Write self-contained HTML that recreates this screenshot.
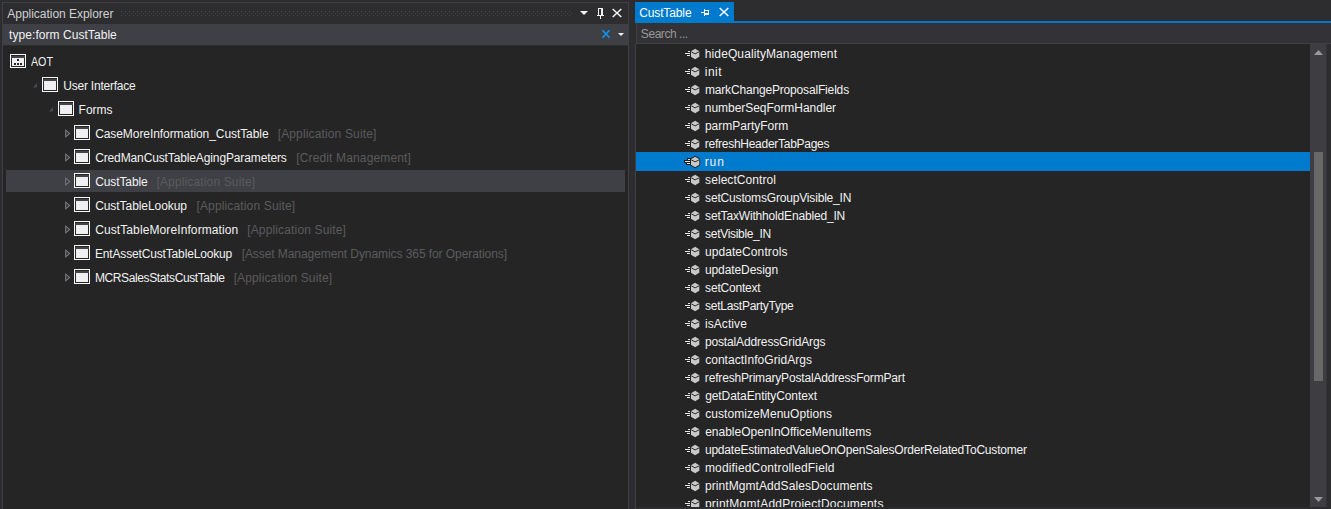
<!DOCTYPE html>
<html><head><meta charset="utf-8"><title>Application Explorer</title>
<style>
html,body{margin:0;padding:0;}
body{width:1331px;height:509px;overflow:hidden;background:#2d2d30;position:relative;
 font-family:"Liberation Sans",sans-serif;font-size:12px;color:#f1f1f1;}
.abs{position:absolute;}
.t{position:absolute;white-space:nowrap;line-height:14px;height:14px;}
.tag{color:#5b5b5c;}
svg{position:absolute;overflow:visible;}
</style></head><body>

<div class="abs" style="left:2px;top:2px;width:627px;height:507px;background:#3f3f46;"></div>
<div class="abs" style="left:3px;top:3px;width:625px;height:21px;background:#2d2d30;"></div>
<div class="abs" style="left:3px;top:24px;width:625px;height:21px;background:#3f3f46;"></div>
<div class="abs" style="left:3px;top:45px;width:625px;height:1px;background:#2d2d30;"></div>
<div class="abs" style="left:3px;top:46px;width:625px;height:463px;background:#252526;"></div>
<span class="t" id="ttl" style="left:7.3px;top:7px;color:#d0d0d0;letter-spacing:-0.036px;margin-left:0.07px;">Application Explorer</span>
<svg style="left:121px;top:11px" width="452" height="5" shape-rendering="crispEdges"><defs><pattern id="gp" width="4" height="4" patternUnits="userSpaceOnUse"><rect x="0" y="0" width="1" height="1" fill="#46464a"/><rect x="2" y="2" width="1" height="1" fill="#46464a"/></pattern></defs><rect width="452" height="5" fill="url(#gp)"/></svg>
<svg style="left:580px;top:11px" width="8" height="4"><path d="M0 0H8L4 4Z" fill="#f1f1f1"/></svg>
<svg style="left:597px;top:8px" width="8" height="11" shape-rendering="crispEdges"><path d="M2 0H6V7H7V8H4V11H3V8H0V7H1V0H2ZM2 1V7H4V1Z" fill="#f1f1f1" fill-rule="evenodd"/></svg>
<svg style="left:612px;top:9px" width="10" height="8"><path d="M0.7 0L9.3 8M9.3 0L0.7 8" stroke="#f1f1f1" stroke-width="1.55" fill="none"/></svg>
<span class="t" id="srch" style="left:9px;top:28px;letter-spacing:0.053px;margin-left:0.11px;">type:form CustTable</span>
<svg style="left:602px;top:30px" width="8" height="8"><path d="M0.5 0.3L7.5 7.7M7.5 0.3L0.5 7.7" stroke="#0a97f5" stroke-width="1.6" fill="none"/></svg>
<svg style="left:618px;top:33px" width="6" height="3"><path d="M0 0H6L3 3Z" fill="#f1f1f1"/></svg>
<svg style="left:10px;top:54px" width="16" height="14" shape-rendering="crispEdges"><rect x="0.5" y="0.5" width="15" height="13" fill="#252526" stroke="#f8f8f8"/><rect x="1" y="2" width="14" height="2" fill="#464648"/><rect x="2" y="4" width="12" height="8" fill="#efeff1"/><rect x="7" y="5" width="2" height="2" fill="#252526"/><rect x="4" y="9" width="2" height="2" fill="#252526"/><rect x="7" y="9" width="2" height="2" fill="#252526"/><rect x="10" y="9" width="2" height="2" fill="#252526"/></svg>
<span class="t" id="aot" style="left:31.4px;top:55px;transform-origin:0 0;transform:scaleX(0.8895);margin-left:-0.35px;">AOT</span>
<svg style="left:32.8px;top:83.2px" width="4" height="4.5"><path d="M4 0V4.5H0Z" fill="#48484a"/></svg>
<svg style="left:42px;top:77px" width="16" height="15" shape-rendering="crispEdges"><rect x="0.5" y="0.5" width="15" height="14" fill="#252526" stroke="#f8f8f8"/><rect x="1" y="2" width="14" height="2" fill="#464648"/><rect x="2" y="4" width="12" height="9" fill="#efeff1"/></svg>
<span class="t" id="ui" style="left:63.9px;top:79px;letter-spacing:-0.225px;margin-left:-0.60px;">User Interface</span>
<svg style="left:48.8px;top:107.2px" width="4" height="4.5"><path d="M4 0V4.5H0Z" fill="#48484a"/></svg>
<svg style="left:58px;top:101px" width="16" height="15" shape-rendering="crispEdges"><rect x="0.5" y="0.5" width="15" height="14" fill="#252526" stroke="#f8f8f8"/><rect x="1" y="2" width="14" height="2" fill="#464648"/><rect x="2" y="4" width="12" height="9" fill="#efeff1"/></svg>
<span class="t" id="forms" style="left:79.6px;top:103px;letter-spacing:-0.014px;margin-left:-0.99px;">Forms</span>
<svg style="left:65px;top:128.5px" width="6" height="9"><path d="M0.7 1.1L4.7 4.5L0.7 7.9Z" fill="#353537" stroke="#77777a" stroke-width="1.1"/></svg>
<svg style="left:74px;top:125px" width="16" height="15" shape-rendering="crispEdges"><rect x="0.5" y="0.5" width="15" height="14" fill="#252526" stroke="#f8f8f8"/><rect x="1" y="2" width="14" height="2" fill="#464648"/><rect x="2" y="4" width="12" height="9" fill="#efeff1"/></svg>
<span class="t" id="l0" style="left:95.5px;top:127px;letter-spacing:-0.070px;margin-left:-0.37px;">CaseMoreInformation_CustTable</span>
<span class="t tag" id="g0" style="left:278.75px;top:127px;letter-spacing:0.145px;margin-left:-1.10px;">[Application Suite]</span>
<svg style="left:65px;top:152.5px" width="6" height="9"><path d="M0.7 1.1L4.7 4.5L0.7 7.9Z" fill="#353537" stroke="#77777a" stroke-width="1.1"/></svg>
<svg style="left:74px;top:149px" width="16" height="15" shape-rendering="crispEdges"><rect x="0.5" y="0.5" width="15" height="14" fill="#252526" stroke="#f8f8f8"/><rect x="1" y="2" width="14" height="2" fill="#464648"/><rect x="2" y="4" width="12" height="9" fill="#efeff1"/></svg>
<span class="t" id="l1" style="left:95.5px;top:151px;letter-spacing:-0.124px;margin-left:-0.37px;">CredManCustTableAgingParameters</span>
<span class="t tag" id="g1" style="left:297px;top:151px;letter-spacing:0.149px;margin-left:-0.82px;">[Credit Management]</span>
<div class="abs" style="left:6px;top:170px;width:619px;height:22px;background:#3f3f46;"></div>
<svg style="left:65px;top:176.5px" width="6" height="9"><path d="M0.7 1.1L4.7 4.5L0.7 7.9Z" fill="#353537" stroke="#77777a" stroke-width="1.1"/></svg>
<svg style="left:74px;top:173px" width="16" height="15" shape-rendering="crispEdges"><rect x="0.5" y="0.5" width="15" height="14" fill="#252526" stroke="#f8f8f8"/><rect x="1" y="2" width="14" height="2" fill="#464648"/><rect x="2" y="4" width="12" height="9" fill="#efeff1"/></svg>
<span class="t" id="l2" style="left:95.5px;top:175px;letter-spacing:-0.088px;margin-left:-0.38px;">CustTable</span>
<span class="t tag" id="g2" style="left:157.5px;top:175px;letter-spacing:0.143px;margin-left:-1.07px;">[Application Suite]</span>
<svg style="left:65px;top:200.5px" width="6" height="9"><path d="M0.7 1.1L4.7 4.5L0.7 7.9Z" fill="#353537" stroke="#77777a" stroke-width="1.1"/></svg>
<svg style="left:74px;top:197px" width="16" height="15" shape-rendering="crispEdges"><rect x="0.5" y="0.5" width="15" height="14" fill="#252526" stroke="#f8f8f8"/><rect x="1" y="2" width="14" height="2" fill="#464648"/><rect x="2" y="4" width="12" height="9" fill="#efeff1"/></svg>
<span class="t" id="l3" style="left:95.5px;top:199px;letter-spacing:-0.060px;margin-left:-0.37px;">CustTableLookup</span>
<span class="t tag" id="g3" style="left:197.5px;top:199px;letter-spacing:0.145px;margin-left:-1.04px;">[Application Suite]</span>
<svg style="left:65px;top:224.5px" width="6" height="9"><path d="M0.7 1.1L4.7 4.5L0.7 7.9Z" fill="#353537" stroke="#77777a" stroke-width="1.1"/></svg>
<svg style="left:74px;top:221px" width="16" height="15" shape-rendering="crispEdges"><rect x="0.5" y="0.5" width="15" height="14" fill="#252526" stroke="#f8f8f8"/><rect x="1" y="2" width="14" height="2" fill="#464648"/><rect x="2" y="4" width="12" height="9" fill="#efeff1"/></svg>
<span class="t" id="l4" style="left:95.5px;top:223px;letter-spacing:0.105px;margin-left:-0.37px;">CustTableMoreInformation</span>
<span class="t tag" id="g4" style="left:248px;top:223px;letter-spacing:0.150px;margin-left:-0.82px;">[Application Suite]</span>
<svg style="left:65px;top:248.5px" width="6" height="9"><path d="M0.7 1.1L4.7 4.5L0.7 7.9Z" fill="#353537" stroke="#77777a" stroke-width="1.1"/></svg>
<svg style="left:74px;top:245px" width="16" height="15" shape-rendering="crispEdges"><rect x="0.5" y="0.5" width="15" height="14" fill="#252526" stroke="#f8f8f8"/><rect x="1" y="2" width="14" height="2" fill="#464648"/><rect x="2" y="4" width="12" height="9" fill="#efeff1"/></svg>
<span class="t" id="l5" style="left:95.5px;top:247px;letter-spacing:-0.158px;margin-left:-0.56px;">EntAssetCustTableLookup</span>
<span class="t tag" id="g5" style="left:242.6px;top:247px;letter-spacing:-0.075px;margin-left:-0.96px;">[Asset Management Dynamics 365 for Operations]</span>
<svg style="left:65px;top:272.5px" width="6" height="9"><path d="M0.7 1.1L4.7 4.5L0.7 7.9Z" fill="#353537" stroke="#77777a" stroke-width="1.1"/></svg>
<svg style="left:74px;top:269px" width="16" height="15" shape-rendering="crispEdges"><rect x="0.5" y="0.5" width="15" height="14" fill="#252526" stroke="#f8f8f8"/><rect x="1" y="2" width="14" height="2" fill="#464648"/><rect x="2" y="4" width="12" height="9" fill="#efeff1"/></svg>
<span class="t" id="l6" style="left:95.5px;top:271px;letter-spacing:-0.386px;margin-left:-0.56px;">MCRSalesStatsCustTable</span>
<span class="t tag" id="g6" style="left:234.3px;top:271px;letter-spacing:0.131px;margin-left:-0.65px;">[Application Suite]</span>
<div class="abs" style="left:635px;top:2px;width:99px;height:21px;background:#007acc;"></div>
<div class="abs" style="left:635px;top:21px;width:696px;height:2px;background:#007acc;"></div>
<span class="t" id="tab" style="left:639.9px;top:6px;color:#ffffff;letter-spacing:-0.115px;margin-left:-0.75px;">CustTable</span>
<svg style="left:701px;top:9px" width="9" height="7" shape-rendering="crispEdges"><path d="M0 3H3V0H4V1H8V6H4V7H3V4H0ZM4 2V4H7V2Z" fill="#ffffff" fill-rule="evenodd"/></svg>
<svg style="left:719px;top:8px" width="10" height="8"><path d="M0.7 0L9.3 8M9.3 0L0.7 8" stroke="#ffffff" stroke-width="1.55" fill="none"/></svg>
<div class="abs" style="left:636px;top:23px;width:695px;height:21px;background:#3f3f46;"></div>
<div class="abs" style="left:637px;top:23px;width:694px;height:20px;background:#333337;"></div>
<span class="t" id="rs" style="left:641.3px;top:27px;color:#999999;letter-spacing:-0.454px;margin-left:-0.44px;">Search ...</span>
<div class="abs" style="left:635px;top:44px;width:1px;height:465px;background:#3f3f46;"></div>
<div class="abs" style="left:636px;top:44px;width:674px;height:463px;background:#252526;overflow:hidden;" id="list">
<svg style="left:49px;top:5px" width="15" height="11"><g shape-rendering="crispEdges" fill="#e4e4e4"><rect x="3" y="2" width="2" height="1"/><rect x="0" y="4" width="5" height="1"/><rect x="2" y="6" width="3" height="1"/></g><path d="M10.1 -0.3L14.3 2.3V7.7L10.1 10.2L6 7.7V2.3Z" fill="#c8c8c8"/><path d="M6.2 2.8L10.1 4.9L14.1 2.8" fill="none" stroke="#2c2c2d" stroke-width="1"/></svg>
<span class="t" id="r0" style="left:69.29999999999995px;top:3px;letter-spacing:0.103px;margin-left:-0.47px;">hideQualityManagement</span>
<svg style="left:49px;top:23px" width="15" height="11"><g shape-rendering="crispEdges" fill="#e4e4e4"><rect x="3" y="2" width="2" height="1"/><rect x="0" y="4" width="5" height="1"/><rect x="2" y="6" width="3" height="1"/></g><path d="M10.1 -0.3L14.3 2.3V7.7L10.1 10.2L6 7.7V2.3Z" fill="#c8c8c8"/><path d="M6.2 2.8L10.1 4.9L14.1 2.8" fill="none" stroke="#2c2c2d" stroke-width="1"/></svg>
<span class="t" id="r1" style="left:69.29999999999995px;top:21px;letter-spacing:0.439px;margin-left:-0.45px;">init</span>
<svg style="left:49px;top:41px" width="15" height="11"><g shape-rendering="crispEdges" fill="#e4e4e4"><rect x="3" y="2" width="2" height="1"/><rect x="0" y="4" width="5" height="1"/><rect x="2" y="6" width="3" height="1"/></g><path d="M10.1 -0.3L14.3 2.3V7.7L10.1 10.2L6 7.7V2.3Z" fill="#c8c8c8"/><path d="M6.2 2.8L10.1 4.9L14.1 2.8" fill="none" stroke="#2c2c2d" stroke-width="1"/></svg>
<span class="t" id="r2" style="left:69.29999999999995px;top:39px;letter-spacing:-0.168px;margin-left:-0.39px;">markChangeProposalFields</span>
<svg style="left:49px;top:59px" width="15" height="11"><g shape-rendering="crispEdges" fill="#e4e4e4"><rect x="3" y="2" width="2" height="1"/><rect x="0" y="4" width="5" height="1"/><rect x="2" y="6" width="3" height="1"/></g><path d="M10.1 -0.3L14.3 2.3V7.7L10.1 10.2L6 7.7V2.3Z" fill="#c8c8c8"/><path d="M6.2 2.8L10.1 4.9L14.1 2.8" fill="none" stroke="#2c2c2d" stroke-width="1"/></svg>
<span class="t" id="r3" style="left:69.29999999999995px;top:57px;letter-spacing:-0.042px;margin-left:-0.47px;">numberSeqFormHandler</span>
<svg style="left:49px;top:77px" width="15" height="11"><g shape-rendering="crispEdges" fill="#e4e4e4"><rect x="3" y="2" width="2" height="1"/><rect x="0" y="4" width="5" height="1"/><rect x="2" y="6" width="3" height="1"/></g><path d="M10.1 -0.3L14.3 2.3V7.7L10.1 10.2L6 7.7V2.3Z" fill="#c8c8c8"/><path d="M6.2 2.8L10.1 4.9L14.1 2.8" fill="none" stroke="#2c2c2d" stroke-width="1"/></svg>
<span class="t" id="r4" style="left:69.29999999999995px;top:75px;letter-spacing:-0.005px;margin-left:-0.38px;">parmPartyForm</span>
<svg style="left:49px;top:95px" width="15" height="11"><g shape-rendering="crispEdges" fill="#e4e4e4"><rect x="3" y="2" width="2" height="1"/><rect x="0" y="4" width="5" height="1"/><rect x="2" y="6" width="3" height="1"/></g><path d="M10.1 -0.3L14.3 2.3V7.7L10.1 10.2L6 7.7V2.3Z" fill="#c8c8c8"/><path d="M6.2 2.8L10.1 4.9L14.1 2.8" fill="none" stroke="#2c2c2d" stroke-width="1"/></svg>
<span class="t" id="r5" style="left:69.29999999999995px;top:93px;letter-spacing:-0.273px;margin-left:-0.44px;">refreshHeaderTabPages</span>
<div class="abs" style="left:0;top:108px;width:674px;height:19px;background:#007acc;"></div>
<svg style="left:49px;top:113px" width="15" height="11"><g shape-rendering="crispEdges" fill="#e4e4e4" stroke="#1e1e1e" stroke-width="1.6" paint-order="stroke"><rect x="3" y="2" width="2" height="1"/><rect x="0" y="4" width="5" height="1"/><rect x="2" y="6" width="3" height="1"/></g><path d="M10.1 -0.3L14.3 2.3V7.7L10.1 10.2L6 7.7V2.3Z" fill="#c8c8c8" stroke="#1e1e1e" stroke-width="1.6" paint-order="stroke"/><path d="M6.2 2.8L10.1 4.9L14.1 2.8" fill="none" stroke="#2c2c2d" stroke-width="1"/></svg>
<span class="t" id="r6" style="left:69.29999999999995px;top:111px;letter-spacing:0.892px;margin-left:-0.62px;">run</span>
<svg style="left:49px;top:131px" width="15" height="11"><g shape-rendering="crispEdges" fill="#e4e4e4"><rect x="3" y="2" width="2" height="1"/><rect x="0" y="4" width="5" height="1"/><rect x="2" y="6" width="3" height="1"/></g><path d="M10.1 -0.3L14.3 2.3V7.7L10.1 10.2L6 7.7V2.3Z" fill="#c8c8c8"/><path d="M6.2 2.8L10.1 4.9L14.1 2.8" fill="none" stroke="#2c2c2d" stroke-width="1"/></svg>
<span class="t" id="r7" style="left:69.29999999999995px;top:129px;letter-spacing:0.059px;margin-left:-0.19px;">selectControl</span>
<svg style="left:49px;top:149px" width="15" height="11"><g shape-rendering="crispEdges" fill="#e4e4e4"><rect x="3" y="2" width="2" height="1"/><rect x="0" y="4" width="5" height="1"/><rect x="2" y="6" width="3" height="1"/></g><path d="M10.1 -0.3L14.3 2.3V7.7L10.1 10.2L6 7.7V2.3Z" fill="#c8c8c8"/><path d="M6.2 2.8L10.1 4.9L14.1 2.8" fill="none" stroke="#2c2c2d" stroke-width="1"/></svg>
<span class="t" id="r8" style="left:69.29999999999995px;top:147px;letter-spacing:-0.174px;margin-left:-0.19px;">setCustomsGroupVisible_IN</span>
<svg style="left:49px;top:167px" width="15" height="11"><g shape-rendering="crispEdges" fill="#e4e4e4"><rect x="3" y="2" width="2" height="1"/><rect x="0" y="4" width="5" height="1"/><rect x="2" y="6" width="3" height="1"/></g><path d="M10.1 -0.3L14.3 2.3V7.7L10.1 10.2L6 7.7V2.3Z" fill="#c8c8c8"/><path d="M6.2 2.8L10.1 4.9L14.1 2.8" fill="none" stroke="#2c2c2d" stroke-width="1"/></svg>
<span class="t" id="r9" style="left:69.29999999999995px;top:165px;letter-spacing:-0.173px;margin-left:-0.19px;">setTaxWithholdEnabled_IN</span>
<svg style="left:49px;top:185px" width="15" height="11"><g shape-rendering="crispEdges" fill="#e4e4e4"><rect x="3" y="2" width="2" height="1"/><rect x="0" y="4" width="5" height="1"/><rect x="2" y="6" width="3" height="1"/></g><path d="M10.1 -0.3L14.3 2.3V7.7L10.1 10.2L6 7.7V2.3Z" fill="#c8c8c8"/><path d="M6.2 2.8L10.1 4.9L14.1 2.8" fill="none" stroke="#2c2c2d" stroke-width="1"/></svg>
<span class="t" id="r10" style="left:69.29999999999995px;top:183px;letter-spacing:-0.313px;margin-left:-0.19px;">setVisible_IN</span>
<svg style="left:49px;top:203px" width="15" height="11"><g shape-rendering="crispEdges" fill="#e4e4e4"><rect x="3" y="2" width="2" height="1"/><rect x="0" y="4" width="5" height="1"/><rect x="2" y="6" width="3" height="1"/></g><path d="M10.1 -0.3L14.3 2.3V7.7L10.1 10.2L6 7.7V2.3Z" fill="#c8c8c8"/><path d="M6.2 2.8L10.1 4.9L14.1 2.8" fill="none" stroke="#2c2c2d" stroke-width="1"/></svg>
<span class="t" id="r11" style="left:69.29999999999995px;top:201px;letter-spacing:0.086px;margin-left:-0.41px;">updateControls</span>
<svg style="left:49px;top:221px" width="15" height="11"><g shape-rendering="crispEdges" fill="#e4e4e4"><rect x="3" y="2" width="2" height="1"/><rect x="0" y="4" width="5" height="1"/><rect x="2" y="6" width="3" height="1"/></g><path d="M10.1 -0.3L14.3 2.3V7.7L10.1 10.2L6 7.7V2.3Z" fill="#c8c8c8"/><path d="M6.2 2.8L10.1 4.9L14.1 2.8" fill="none" stroke="#2c2c2d" stroke-width="1"/></svg>
<span class="t" id="r12" style="left:69.29999999999995px;top:219px;letter-spacing:-0.080px;margin-left:-0.41px;">updateDesign</span>
<svg style="left:49px;top:239px" width="15" height="11"><g shape-rendering="crispEdges" fill="#e4e4e4"><rect x="3" y="2" width="2" height="1"/><rect x="0" y="4" width="5" height="1"/><rect x="2" y="6" width="3" height="1"/></g><path d="M10.1 -0.3L14.3 2.3V7.7L10.1 10.2L6 7.7V2.3Z" fill="#c8c8c8"/><path d="M6.2 2.8L10.1 4.9L14.1 2.8" fill="none" stroke="#2c2c2d" stroke-width="1"/></svg>
<span class="t" id="r13" style="left:69.29999999999995px;top:237px;letter-spacing:-0.204px;margin-left:-0.19px;">setContext</span>
<svg style="left:49px;top:257px" width="15" height="11"><g shape-rendering="crispEdges" fill="#e4e4e4"><rect x="3" y="2" width="2" height="1"/><rect x="0" y="4" width="5" height="1"/><rect x="2" y="6" width="3" height="1"/></g><path d="M10.1 -0.3L14.3 2.3V7.7L10.1 10.2L6 7.7V2.3Z" fill="#c8c8c8"/><path d="M6.2 2.8L10.1 4.9L14.1 2.8" fill="none" stroke="#2c2c2d" stroke-width="1"/></svg>
<span class="t" id="r14" style="left:69.29999999999995px;top:255px;letter-spacing:-0.271px;margin-left:-0.19px;">setLastPartyType</span>
<svg style="left:49px;top:275px" width="15" height="11"><g shape-rendering="crispEdges" fill="#e4e4e4"><rect x="3" y="2" width="2" height="1"/><rect x="0" y="4" width="5" height="1"/><rect x="2" y="6" width="3" height="1"/></g><path d="M10.1 -0.3L14.3 2.3V7.7L10.1 10.2L6 7.7V2.3Z" fill="#c8c8c8"/><path d="M6.2 2.8L10.1 4.9L14.1 2.8" fill="none" stroke="#2c2c2d" stroke-width="1"/></svg>
<span class="t" id="r15" style="left:69.29999999999995px;top:273px;letter-spacing:0.081px;margin-left:-0.41px;">isActive</span>
<svg style="left:49px;top:293px" width="15" height="11"><g shape-rendering="crispEdges" fill="#e4e4e4"><rect x="3" y="2" width="2" height="1"/><rect x="0" y="4" width="5" height="1"/><rect x="2" y="6" width="3" height="1"/></g><path d="M10.1 -0.3L14.3 2.3V7.7L10.1 10.2L6 7.7V2.3Z" fill="#c8c8c8"/><path d="M6.2 2.8L10.1 4.9L14.1 2.8" fill="none" stroke="#2c2c2d" stroke-width="1"/></svg>
<span class="t" id="r16" style="left:69.29999999999995px;top:291px;letter-spacing:-0.142px;margin-left:-0.38px;">postalAddressGridArgs</span>
<svg style="left:49px;top:311px" width="15" height="11"><g shape-rendering="crispEdges" fill="#e4e4e4"><rect x="3" y="2" width="2" height="1"/><rect x="0" y="4" width="5" height="1"/><rect x="2" y="6" width="3" height="1"/></g><path d="M10.1 -0.3L14.3 2.3V7.7L10.1 10.2L6 7.7V2.3Z" fill="#c8c8c8"/><path d="M6.2 2.8L10.1 4.9L14.1 2.8" fill="none" stroke="#2c2c2d" stroke-width="1"/></svg>
<span class="t" id="r17" style="left:69.29999999999995px;top:309px;letter-spacing:0.042px;margin-left:-0.18px;">contactInfoGridArgs</span>
<svg style="left:49px;top:329px" width="15" height="11"><g shape-rendering="crispEdges" fill="#e4e4e4"><rect x="3" y="2" width="2" height="1"/><rect x="0" y="4" width="5" height="1"/><rect x="2" y="6" width="3" height="1"/></g><path d="M10.1 -0.3L14.3 2.3V7.7L10.1 10.2L6 7.7V2.3Z" fill="#c8c8c8"/><path d="M6.2 2.8L10.1 4.9L14.1 2.8" fill="none" stroke="#2c2c2d" stroke-width="1"/></svg>
<span class="t" id="r18" style="left:69.29999999999995px;top:327px;letter-spacing:-0.175px;margin-left:-0.44px;">refreshPrimaryPostalAddressFormPart</span>
<svg style="left:49px;top:347px" width="15" height="11"><g shape-rendering="crispEdges" fill="#e4e4e4"><rect x="3" y="2" width="2" height="1"/><rect x="0" y="4" width="5" height="1"/><rect x="2" y="6" width="3" height="1"/></g><path d="M10.1 -0.3L14.3 2.3V7.7L10.1 10.2L6 7.7V2.3Z" fill="#c8c8c8"/><path d="M6.2 2.8L10.1 4.9L14.1 2.8" fill="none" stroke="#2c2c2d" stroke-width="1"/></svg>
<span class="t" id="r19" style="left:69.29999999999995px;top:345px;letter-spacing:-0.081px;margin-left:-0.14px;">getDataEntityContext</span>
<svg style="left:49px;top:365px" width="15" height="11"><g shape-rendering="crispEdges" fill="#e4e4e4"><rect x="3" y="2" width="2" height="1"/><rect x="0" y="4" width="5" height="1"/><rect x="2" y="6" width="3" height="1"/></g><path d="M10.1 -0.3L14.3 2.3V7.7L10.1 10.2L6 7.7V2.3Z" fill="#c8c8c8"/><path d="M6.2 2.8L10.1 4.9L14.1 2.8" fill="none" stroke="#2c2c2d" stroke-width="1"/></svg>
<span class="t" id="r20" style="left:69.29999999999995px;top:363px;letter-spacing:0.074px;margin-left:-0.18px;">customizeMenuOptions</span>
<svg style="left:49px;top:383px" width="15" height="11"><g shape-rendering="crispEdges" fill="#e4e4e4"><rect x="3" y="2" width="2" height="1"/><rect x="0" y="4" width="5" height="1"/><rect x="2" y="6" width="3" height="1"/></g><path d="M10.1 -0.3L14.3 2.3V7.7L10.1 10.2L6 7.7V2.3Z" fill="#c8c8c8"/><path d="M6.2 2.8L10.1 4.9L14.1 2.8" fill="none" stroke="#2c2c2d" stroke-width="1"/></svg>
<span class="t" id="r21" style="left:69.29999999999995px;top:381px;letter-spacing:0.005px;margin-left:-0.18px;">enableOpenInOfficeMenuItems</span>
<svg style="left:49px;top:401px" width="15" height="11"><g shape-rendering="crispEdges" fill="#e4e4e4"><rect x="3" y="2" width="2" height="1"/><rect x="0" y="4" width="5" height="1"/><rect x="2" y="6" width="3" height="1"/></g><path d="M10.1 -0.3L14.3 2.3V7.7L10.1 10.2L6 7.7V2.3Z" fill="#c8c8c8"/><path d="M6.2 2.8L10.1 4.9L14.1 2.8" fill="none" stroke="#2c2c2d" stroke-width="1"/></svg>
<span class="t" id="r22" style="left:69.29999999999995px;top:399px;letter-spacing:-0.188px;margin-left:-0.41px;">updateEstimatedValueOnOpenSalesOrderRelatedToCustomer</span>
<svg style="left:49px;top:419px" width="15" height="11"><g shape-rendering="crispEdges" fill="#e4e4e4"><rect x="3" y="2" width="2" height="1"/><rect x="0" y="4" width="5" height="1"/><rect x="2" y="6" width="3" height="1"/></g><path d="M10.1 -0.3L14.3 2.3V7.7L10.1 10.2L6 7.7V2.3Z" fill="#c8c8c8"/><path d="M6.2 2.8L10.1 4.9L14.1 2.8" fill="none" stroke="#2c2c2d" stroke-width="1"/></svg>
<span class="t" id="r23" style="left:69.29999999999995px;top:417px;letter-spacing:0.160px;margin-left:-0.39px;">modifiedControlledField</span>
<svg style="left:49px;top:437px" width="15" height="11"><g shape-rendering="crispEdges" fill="#e4e4e4"><rect x="3" y="2" width="2" height="1"/><rect x="0" y="4" width="5" height="1"/><rect x="2" y="6" width="3" height="1"/></g><path d="M10.1 -0.3L14.3 2.3V7.7L10.1 10.2L6 7.7V2.3Z" fill="#c8c8c8"/><path d="M6.2 2.8L10.1 4.9L14.1 2.8" fill="none" stroke="#2c2c2d" stroke-width="1"/></svg>
<span class="t" id="r24" style="left:69.29999999999995px;top:435px;letter-spacing:0.083px;margin-left:-0.38px;">printMgmtAddSalesDocuments</span>
<svg style="left:49px;top:455px" width="15" height="11"><g shape-rendering="crispEdges" fill="#e4e4e4"><rect x="3" y="2" width="2" height="1"/><rect x="0" y="4" width="5" height="1"/><rect x="2" y="6" width="3" height="1"/></g><path d="M10.1 -0.3L14.3 2.3V7.7L10.1 10.2L6 7.7V2.3Z" fill="#c8c8c8"/><path d="M6.2 2.8L10.1 4.9L14.1 2.8" fill="none" stroke="#2c2c2d" stroke-width="1"/></svg>
<span class="t" id="r25" style="left:69.29999999999995px;top:453px;letter-spacing:0.212px;margin-left:-0.38px;">printMgmtAddProjectDocuments</span>
</div>
<div class="abs" style="left:1310px;top:44px;width:16px;height:463px;background:#3e3e42;"></div>
<div class="abs" style="left:1326px;top:44px;width:1px;height:463px;background:#353538;"></div>
<div class="abs" style="left:1314px;top:152px;width:9px;height:229px;background:#686868;"></div>
<svg style="left:1314px;top:50px" width="9" height="5"><path d="M0 5H9L4.5 0Z" fill="#999999"/></svg>
<svg style="left:1314px;top:497px" width="9" height="5"><path d="M0 0H9L4.5 5Z" fill="#999999"/></svg>
</body></html>
